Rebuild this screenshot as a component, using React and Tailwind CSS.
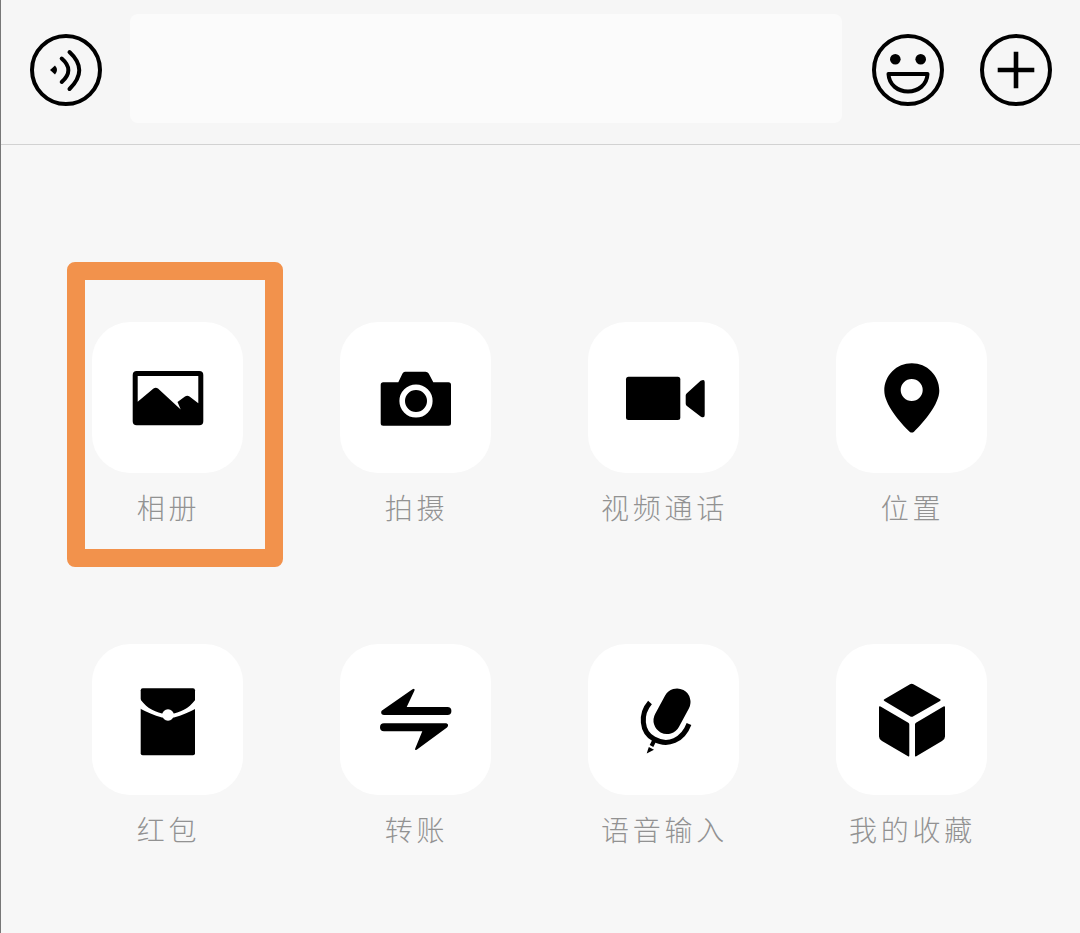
import React from 'react';

const IconVoice = () => (
  <svg viewBox="0 0 80 80" className="w-[80px] h-[80px] shrink-0" fill="none" stroke="#000">
    <circle cx="40" cy="40" r="34" strokeWidth="4" />
    <path d="M35.7 28.5Q49 40 35.7 52" strokeWidth="4" strokeLinecap="round" />
    <path d="M43.5 22Q63 40 43.5 59" strokeWidth="4" strokeLinecap="round" />
    <path d="M24 40L29 35.5Q33 40 29 44.5Z" fill="#000" stroke="none" />
  </svg>
);

const IconSmile = () => (
  <svg viewBox="0 0 80 80" className="w-[80px] h-[80px] shrink-0" fill="none" stroke="#000">
    <circle cx="40" cy="40" r="34" strokeWidth="4" />
    <circle cx="27.3" cy="29.3" r="5.3" fill="#000" stroke="none" />
    <circle cx="52.7" cy="29.3" r="5.3" fill="#000" stroke="none" />
    <path d="M20.5 44H59.5C59 55 50 61.5 40 61.5C30 61.5 21 55 20.5 44Z" strokeWidth="4" strokeLinejoin="round" />
  </svg>
);

const IconPlus = () => (
  <svg viewBox="0 0 80 80" className="w-[80px] h-[80px] shrink-0" fill="none" stroke="#000">
    <circle cx="40" cy="40" r="34" strokeWidth="4" />
    <path d="M21.7 40H58.3M40 21.7V58.3" strokeWidth="4.6" />
  </svg>
);

// tile icons are all drawn on the tile's own 151 grid
const Glyph = ({ children }) => (
  <svg viewBox="0 0 151 151" className="block w-full h-full" fill="#000">
    {children}
  </svg>
);

const icons = {
  album: (
    <Glyph>
      <path fillRule="evenodd" d="M44.7 49H107.3A4 4 0 0 1 111.3 53V99.3A4 4 0 0 1 107.3 103.3H44.7A4 4 0 0 1 40.7 99.3V53A4 4 0 0 1 44.7 49ZM45.7 54V79.7L61.5 66.5Q63.7 64.8 66 66.5L88.7 87.5L85.5 80L93 74.5Q95.3 73 97.5 74.5L106.3 81.3V54Z" />
    </Glyph>
  ),
  camera: (
    <Glyph>
      <path d="M65 49.7H85.5Q87.5 49.7 88.7 51.5L93.3 60.3H108.5A2.5 2.5 0 0 1 111 62.8V101.2A2.5 2.5 0 0 1 108.5 103.7H43.2A2.5 2.5 0 0 1 40.7 101.2V62.8A2.5 2.5 0 0 1 43.2 60.3H58.3L62.5 51.5Q63.5 49.7 65 49.7Z" />
      <circle cx="76" cy="79" r="13.8" fill="none" stroke="#fff" strokeWidth="5.6" />
    </Glyph>
  ),
  video: (
    <Glyph>
      <rect x="38" y="54.7" width="54.3" height="43.3" rx="2.5" />
      <path d="M98.6 71.5L112.6 58.8Q116.7 56.5 116.7 60V93Q116.7 96.8 112.6 94.5L98.6 83.8Q97.7 83 97.7 81.5V73.5Q97.7 72.3 98.6 71.5Z" />
    </Glyph>
  ),
  pin: (
    <Glyph>
      <path fillRule="evenodd" d="M75.8 41.3C91 41.3 103.3 53.3 103.3 68.8C103.3 82 88 100 78 109.7Q75.8 111.5 73.6 109.7C63.5 100 48.3 82 48.3 68.8C48.3 53.3 60.6 41.3 75.8 41.3ZM75.7 57A11 11 0 1 0 75.7 79A11 11 0 1 0 75.7 57Z" />
    </Glyph>
  ),
  packet: (
    <Glyph>
      <path d="M50.7 44.3H101A2 2 0 0 1 103 46.3V109.3A2 2 0 0 1 101 111.3H50.7A2 2 0 0 1 48.7 109.3V46.3A2 2 0 0 1 50.7 44.3Z" />
      <path d="M47 53C52 62 61 67.5 70 69.5L82 69.5C91 67.5 100 62 105 53L105 64C97 68 90 71.5 82 73.5L70 73.5C62 71.5 55 68 47 64Z" fill="#fff" />
      <circle cx="76" cy="71" r="5.8" fill="#fff" />
    </Glyph>
  ),
  transfer: (
    <Glyph>
      <path d="M72.5 45.3Q75 43.5 74.5 46.5L66.7 63H107.4A3.9 3.9 0 0 1 107.4 71H44C41 71 40.5 68 42 66.5Z" />
      <path d="M44 79.3H105.5C108 79.3 109 81.5 107 83.5L77 105.5Q74.5 107 75.2 104.5L82.3 87.3H44A4 4 0 0 1 44 79.3Z" />
    </Glyph>
  ),
  mic: (
    <Glyph>
      <path d="M89 58L79 76.5" fill="none" stroke="#000" strokeWidth="27" strokeLinecap="round" />
      <path d="M62 58.5C52 70 53 88 66 95C80 103 95 96 101 80" fill="none" stroke="#000" strokeWidth="5" />
      <path d="M66.5 96L63.5 102" fill="none" stroke="#000" strokeWidth="4" />
      <path d="M60.8 103L66 105.8L58.7 109.5Z" />
    </Glyph>
  ),
  cube: (
    <Glyph>
      <path d="M74 40.3Q75.7 39.3 77.4 40.3L104 55.2Q105.7 56 104 57L77.4 72.3Q75.7 73.3 74 72.3L48.4 57Q46.7 56 48.4 55.2Z" />
      <path d="M44.5 62.5L72.3 78.7Q73.3 79.3 73.3 80.5V111.5Q73.3 113 72 112.3L46 97Q43 95.3 43 92.5V63.5Q43 61.7 44.5 62.5Z" />
      <path d="M107.5 62.5L80 78.7Q79 79.3 79 80.5V111.5Q79 113 80.3 112.3L106 97Q109 95.3 109 92.5V63.5Q109 61.7 107.5 62.5Z" />
    </Glyph>
  ),
};

const actions = [
  { label: '相册', icon: 'album', selected: true },
  { label: '拍摄', icon: 'camera' },
  { label: '视频通话', icon: 'video' },
  { label: '位置', icon: 'pin' },
  { label: '红包', icon: 'packet' },
  { label: '转账', icon: 'transfer' },
  { label: '语音输入', icon: 'mic' },
  { label: '我的收藏', icon: 'cube' },
];

const ActionItem = ({ label, icon, selected }) => (
  <div className="relative flex flex-col items-center w-[151px]">
    <div className="w-[151px] h-[151px] bg-white rounded-[38px]">{icons[icon]}</div>
    <span className="mt-[14px] ml-[3px] h-10 leading-10 text-[28px] tracking-[3.7px] font-light text-[#929292] whitespace-nowrap">
      {label}
    </span>
    {selected && (
      <div className="absolute -left-[25px] -top-[60px] w-[216px] h-[305px] border-[18px] border-[#f2924c] rounded-lg" />
    )}
  </div>
);

export default function App() {
  return (
    <div
      className="w-[1080px] h-[933px] overflow-hidden bg-[#f7f7f7] border-l-[1.5px] border-[#777777]"
      style={{ fontFamily: '"Noto Sans CJK SC", "Noto Sans", sans-serif' }}
    >
      <div className="h-[145px] flex items-center pl-[24.5px] pb-[5px] border-b border-[#d2d2d2] bg-[#f6f6f6]">
        <IconVoice />
        <div className="ml-[24px] w-[712px] h-[109px] mb-[3px] rounded-lg bg-[#fbfbfb]" />
        <div className="ml-[26px]"><IconSmile /></div>
        <div className="ml-[28px]"><IconPlus /></div>
      </div>
      <div className="grid grid-cols-[repeat(4,151px)] gap-x-[97px] gap-y-[117px] pl-[90.5px] pt-[177px]">
        {actions.map((item) => (
          <ActionItem key={item.label} {...item} />
        ))}
      </div>
    </div>
  );
}
